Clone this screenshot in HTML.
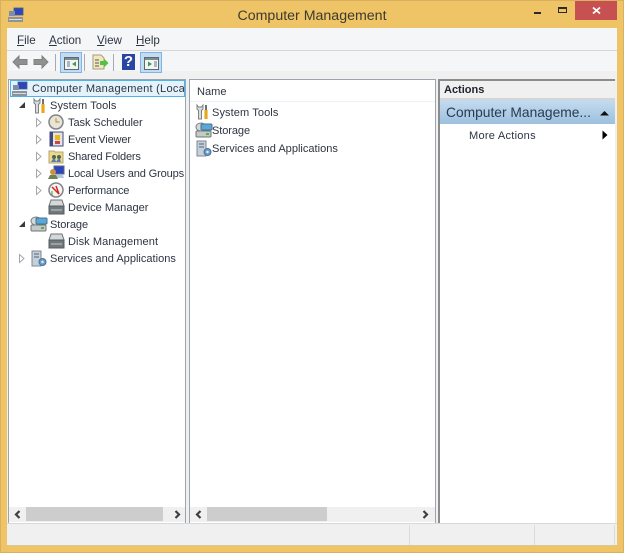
<!DOCTYPE html>
<html><head><meta charset="utf-8">
<style>
html,body{margin:0;padding:0}
body{width:624px;height:553px;position:relative;overflow:hidden;background:#eec466;font-family:"Liberation Sans",sans-serif;font-size:11.05px;color:#2e3542;box-shadow:inset 0 0 0 1px #d8b060}
.a{position:absolute}
.t{position:absolute;white-space:nowrap;line-height:16px;height:16px;margin-top:1px;filter:blur(.3px)}
.m{font-size:11.6px}
svg{position:absolute;overflow:visible;filter:blur(.3px)}
u{text-decoration:underline}
</style></head><body>
<svg width="0" height="0" style="position:absolute"><defs>
<g id="comp"><rect x="6" y="1" width="9" height="7" fill="#2f45c0" stroke="#4a5a78" stroke-width=".8"/><rect x="1" y="4" width="6" height="5" fill="#7c8ea8"/><rect x="0" y="10" width="15" height="5" fill="#8d939c"/><rect x="1" y="12" width="13" height="1" fill="#d8dce0"/></g>
<g id="tools"><path d="M2 1v4l1.500 1.500V15h3V6.500L8 5V1L6.500 3h-3z" fill="#d8dcdc" stroke="#7c8286"/><path d="M11 1v5" stroke="#4c4c48" stroke-width="1.600"/><path d="M11 6v9" stroke="#e8a818" stroke-width="3.200"/></g>
<g id="stor"><rect x="1" y="9" width="15" height="6" rx="1" fill="#c4cacb" stroke="#6f7678"/><rect x="11" y="11" width="3" height="2" fill="#5ab040"/><ellipse cx="6" cy="5" rx="5" ry="4" fill="#d4dadc" stroke="#7a8284"/><rect x="6" y="2" width="11" height="6" rx="1" fill="#5aa8d8" stroke="#48708c"/></g>
<g id="serv"><rect x="1" y="1" width="9" height="15" fill="#c4d0da" stroke="#7c8a98"/><path d="M3 4h5M3 7h5" stroke="#56626e"/><circle cx="11.500" cy="12" r="3.500" fill="#6c9cc8" stroke="#48709c"/><circle cx="11.500" cy="12" r="1.200" fill="#e4edf4"/></g>
<g id="disk"><path d="M3 1h11l2 6H1z" fill="#d4d8da" stroke="#6c7274"/><rect x="1" y="7" width="15" height="8" fill="#70787c" stroke="#555c60"/><path d="M3 11h11" stroke="#c4c8cc"/></g>
<path id="open" d="M0 6 6 0v6z" fill="#3a3a3a"/>
<path id="closed" d="M.5 .5 5 4.500.5 8.500z" fill="#fff" stroke="#a4a8ac"/>
</defs></svg>

<!-- window client -->
<div class="a" style="left:7px;top:28px;width:610px;height:518px;background:#f0f0f0;border:0"></div>
<div class="a" style="left:7px;top:28px;width:610px;height:22px;background:#f5f6f7"></div>
<div class="a" style="left:7px;top:50px;width:610px;height:1px;background:#d4d6d8"></div>
<div class="a" style="left:7px;top:51px;width:610px;height:20px;background:#f5f6f7"></div>

<!-- title bar -->
<svg style="left:8px;top:7px" width="16" height="16"><use href="#comp"/></svg>
<div class="t" style="left:0;top:7px;width:624px;text-align:center;font-size:14.200px;color:#3e3a30">Computer Management</div>
<div class="a" style="left:534px;top:12px;width:7px;height:2px;background:#2a2a2a"></div>
<div class="a" style="left:558px;top:7px;width:7px;height:3px;border:1.500px solid #2a2a2a;border-top-width:2.500px"></div>
<div class="a" style="left:575px;top:1px;width:42px;height:19px;background:#c75050"></div>
<svg style="left:592px;top:7px" width="10" height="8"><path d="M1 .5 8 6.500M8 .5 1 6.500" stroke="#fff" stroke-width="1.800"/></svg>

<!-- menu -->
<div class="t m" style="left:17px;top:32px"><u>F</u>ile</div>
<div class="t m" style="left:49px;top:32px"><u>A</u>ction</div>
<div class="t m" style="left:97px;top:32px"><u>V</u>iew</div>
<div class="t m" style="left:136px;top:32px"><u>H</u>elp</div>

<!-- toolbar -->
<svg style="left:12px;top:55px" width="16" height="14"><path d="M1 7 7 1v3.500h8v5H7V13z" fill="#8f9190" stroke="#808282"/></svg>
<svg style="left:33px;top:55px" width="16" height="14"><path d="M15 7 9 1v3.500H1v5h8V13z" fill="#8f9190" stroke="#808282"/></svg>
<div class="a" style="left:55px;top:54px;width:1px;height:17px;background:#a8aaac"></div>
<div class="a" style="left:60px;top:52px;width:20px;height:19px;background:#c4dcf2;border:1px solid #7cb4e8"></div>
<svg style="left:64px;top:57px" width="16" height="14"><rect x=".5" y=".5" width="14" height="12" fill="#f4f4f4" stroke="#5c6a72"/><rect x="1" y="1" width="13" height="2" fill="#7c8a92"/><path d="M3 5h3M3 7h3M3 9h3" stroke="#6a7a88"/><path d="M12 4.500 8 7l4 2.500z" fill="#2ca83c"/></svg>
<div class="a" style="left:84px;top:54px;width:1px;height:17px;background:#a8aaac"></div>
<svg style="left:92px;top:54px" width="18" height="16"><path d="M1 1h8l3 3v11H1z" fill="#f2e8c0" stroke="#a89c7c"/><path d="M3 6h4M3 9h4M3 12h4" stroke="#555"/><path d="M8 7h4V4.500L16.500 9 12 13.500V11H8z" fill="#58c040"/></svg>
<div class="a" style="left:113px;top:54px;width:1px;height:17px;background:#a8aaac"></div>
<div class="a" style="left:122px;top:54px;width:13px;height:16px;background:#2a46a4;color:#fff;font:bold 15px/16px 'Liberation Sans',sans-serif;text-align:center">?</div>
<div class="a" style="left:140px;top:52px;width:20px;height:19px;background:#c4dcf2;border:1px solid #7cb4e8"></div>
<svg style="left:144px;top:57px" width="16" height="14"><rect x=".5" y=".5" width="14" height="12" fill="#f4f4f4" stroke="#5c6a72"/><rect x="1" y="1" width="13" height="2" fill="#7c8a92"/><path d="M10 5h3M10 7h3M10 9h3" stroke="#6a7a88"/><path d="M4 4.500 8 7 4 9.500z" fill="#2ca83c"/></svg>

<!-- left pane -->
<div class="a" style="left:8px;top:79px;width:176px;height:443px;background:#fff;border:1px solid #9ca4ae"></div>
<div class="a" style="left:10px;top:80px;width:173px;height:15px;background:#e4f3fb;border:1px solid #4eb4e6"></div>
<svg style="left:12px;top:81px" width="16" height="16"><use href="#comp"/></svg>
<div class="t" style="left:32px;top:80px;width:152px;overflow:hidden;letter-spacing:.25px">Computer Management (Local</div>

<svg style="left:19px;top:102px" width="7" height="7"><use href="#open"/></svg>
<svg style="left:32px;top:98px" width="16" height="16"><use href="#tools"/></svg>
<div class="t" style="left:50px;top:97px;letter-spacing:.08px">System Tools</div>

<svg style="left:36px;top:118px" width="7" height="10"><use href="#closed"/></svg>
<svg style="left:48px;top:114px" width="16" height="16"><circle cx="8" cy="8" r="7" fill="#e8e4d8" stroke="#808488" stroke-width="1.500"/><path d="M8 4v4h3.500" stroke="#b89020" fill="none"/></svg>
<div class="t" style="left:68px;top:114px;letter-spacing:-.07px">Task Scheduler</div>

<svg style="left:36px;top:135px" width="7" height="10"><use href="#closed"/></svg>
<svg style="left:49px;top:131px" width="15" height="16"><rect x="1" y="1" width="13" height="14" fill="#e8e4dc" stroke="#404a80"/><rect x="1" y="1" width="3" height="14" fill="#404a80"/><rect x="6" y="4" width="5" height="5" fill="#e8b820"/><rect x="6" y="10" width="5" height="3" fill="#c84848"/></svg>
<div class="t" style="left:68px;top:131px;letter-spacing:-.17px">Event Viewer</div>

<svg style="left:36px;top:152px" width="7" height="10"><use href="#closed"/></svg>
<svg style="left:48px;top:148px" width="16" height="16"><path d="M1 3h5l1 1h8v11H1z" fill="#ecd890" stroke="#b8a468"/><circle cx="6" cy="9" r="2" fill="#4a6a4a"/><circle cx="11" cy="9" r="2" fill="#4a6a4a"/><path d="M3 14l2-3h2l1 3zM8 14l2-3h2l1 3z" fill="#5a7ab0"/></svg>
<div class="t" style="left:68px;top:148px;letter-spacing:-.2px">Shared Folders</div>

<svg style="left:36px;top:169px" width="7" height="10"><use href="#closed"/></svg>
<svg style="left:48px;top:165px" width="16" height="16"><rect x="6" y="1" width="10" height="8" fill="#2f45c0" stroke="#5a6a80"/><path d="M6 10h9l1 3H8z" fill="#b4c8dc"/><circle cx="5" cy="7" r="3" fill="#c89048"/><path d="M0 14l2-4h6l2 4z" fill="#6c8450"/></svg>
<div class="t" style="left:68px;top:165px;letter-spacing:-.14px">Local Users and Groups</div>

<svg style="left:36px;top:186px" width="7" height="10"><use href="#closed"/></svg>
<svg style="left:48px;top:182px" width="16" height="16"><circle cx="8" cy="8" r="7" fill="#f6f4ee" stroke="#80848c" stroke-width="1.500"/><path d="M4 5 11 12 8 4" stroke="#d02828" stroke-width="1.500" fill="none"/><path d="M4 9v4" stroke="#38a038"/></svg>
<div class="t" style="left:68px;top:182px;letter-spacing:-.18px">Performance</div>

<svg style="left:48px;top:199px" width="16" height="16"><use href="#disk"/></svg>
<div class="t" style="left:68px;top:199px">Device Manager</div>

<svg style="left:19px;top:221px" width="7" height="7"><use href="#open"/></svg>
<svg style="left:30px;top:216px" width="17" height="16"><use href="#stor"/></svg>
<div class="t" style="left:50px;top:216px;letter-spacing:-.1px">Storage</div>

<svg style="left:48px;top:233px" width="16" height="16"><use href="#disk"/></svg>
<div class="t" style="left:68px;top:233px;letter-spacing:.07px">Disk Management</div>

<svg style="left:19px;top:254px" width="7" height="10"><use href="#closed"/></svg>
<svg style="left:31px;top:250px" width="16" height="16"><use href="#serv"/></svg>
<div class="t" style="left:50px;top:250px">Services and Applications</div>

<!-- left scrollbar -->
<div class="a" style="left:9px;top:507px;width:176px;height:15px;background:#f0f0f0"></div>
<div class="a" style="left:26px;top:507px;width:137px;height:14px;background:#cdcdcd"></div>
<svg style="left:14px;top:510px" width="7" height="9"><path d="M5.500 1 2 4.500 5.500 8" stroke="#404040" stroke-width="2.200" fill="none"/></svg>
<svg style="left:174px;top:510px" width="7" height="9"><path d="M1.500 1 5 4.500 1.500 8" stroke="#404040" stroke-width="2.200" fill="none"/></svg>

<!-- middle pane -->
<div class="a" style="left:189px;top:79px;width:245px;height:443px;background:#fff;border:1px solid #9ca4ae"></div>
<div class="t" style="left:197px;top:83px">Name</div>
<div class="a" style="left:190px;top:101px;width:245px;height:1px;background:#eef2f6"></div>
<svg style="left:195px;top:104px" width="16" height="16"><use href="#tools"/></svg>
<div class="t" style="left:212px;top:104px;letter-spacing:.08px">System Tools</div>
<svg style="left:195px;top:122px" width="17" height="16"><use href="#stor"/></svg>
<div class="t" style="left:212px;top:122px;letter-spacing:-.1px">Storage</div>
<svg style="left:196px;top:140px" width="16" height="16"><use href="#serv"/></svg>
<div class="t" style="left:212px;top:140px">Services and Applications</div>
<div class="a" style="left:190px;top:507px;width:245px;height:15px;background:#f0f0f0"></div>
<div class="a" style="left:207px;top:507px;width:120px;height:14px;background:#cdcdcd"></div>
<svg style="left:195px;top:510px" width="7" height="9"><path d="M5.500 1 2 4.500 5.500 8" stroke="#404040" stroke-width="2.200" fill="none"/></svg>
<svg style="left:422px;top:510px" width="7" height="9"><path d="M1.500 1 5 4.500 1.500 8" stroke="#404040" stroke-width="2.200" fill="none"/></svg>

<!-- actions -->
<div class="a" style="left:438px;top:79px;background:#fff;border-left:2px solid #8c8c8c;border-top:2px solid #8c8c8c;width:175px;height:442px"></div>
<div class="a" style="left:440px;top:81px;width:175px;height:17px;background:#f0f0f0;border-bottom:2px solid #d4d4d4"></div>
<div class="t" style="left:444px;top:81px;font-weight:bold;color:#20242c;font-size:11px">Actions</div>
<div class="a" style="left:440px;top:100px;width:175px;height:24px;background:linear-gradient(#c4dcf0,#9cc0de)"></div>
<div class="t" style="left:446px;top:104px;font-size:13.800px;color:#2a3a50">Computer Manageme...</div>
<svg style="left:599px;top:110px" width="11" height="6"><path d="M1 5.500 5.500 1 10 5.500z" fill="#101010"/></svg>
<div class="t" style="left:469px;top:127px;letter-spacing:.25px">More Actions</div>
<svg style="left:602px;top:130px" width="6" height="10"><path d="M.5 .5 5.500 5 .5 9.500z" fill="#000"/></svg>

<!-- status bar -->
<div class="a" style="left:7px;top:523px;width:610px;height:1px;background:#d8d8d8"></div>
<div class="a" style="left:7px;top:524px;width:610px;height:21px;background:#f0f0f0"></div>
<div class="a" style="left:7px;top:545px;width:610px;height:1px;background:#d8c898"></div>
<div class="a" style="left:409px;top:525px;width:1px;height:20px;background:#dcdcdc"></div>
<div class="a" style="left:534px;top:525px;width:1px;height:20px;background:#dcdcdc"></div>
<div class="a" style="left:614px;top:525px;width:1px;height:20px;background:#dcdcdc"></div>
</body></html>
